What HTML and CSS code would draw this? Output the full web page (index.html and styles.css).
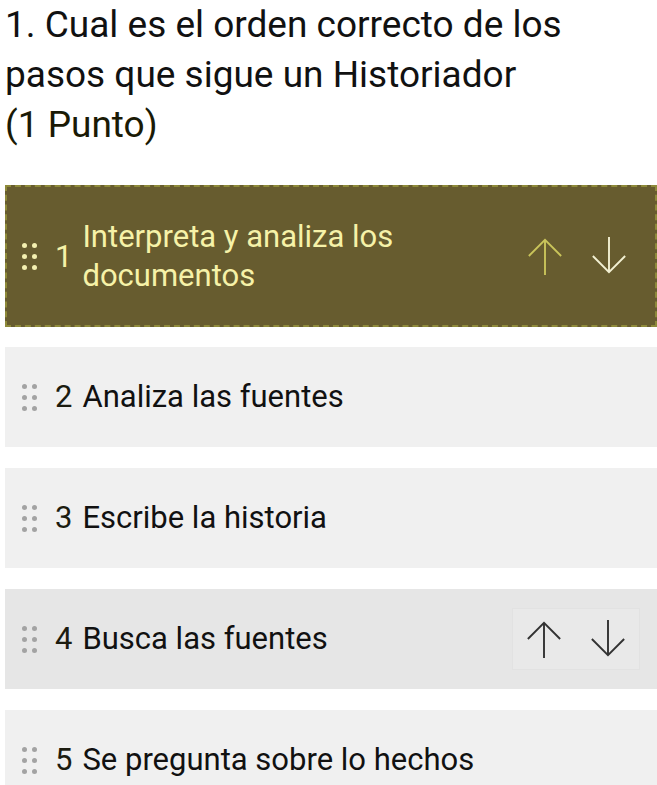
FILE: index.html
```html
<!DOCTYPE html>
<html lang="es">
<head>
  <meta charset="UTF-8" />
  <title>Ordenar pasos</title>
  <link rel="stylesheet" href="styles.css">
</head>
<body>

<div class="question">
  <h2 class="question-title">1. Cual es el orden correcto de los pasos que sigue un Historiador <span class="points">(1 Punto)</span></h2>

  <ul class="rank-list">
    <li class="rank-item selected">
      <span class="handle"><i></i><i></i><i></i><i></i><i></i><i></i></span>
      <span class="num">1</span>
      <span class="label">Interpreta y analiza los documentos</span>
      <span class="moves">
        <svg class="arrow up" viewBox="0 0 40 40"><path d="M20 3V40M3 20L20 3L37 20"/></svg>
        <svg class="arrow down" viewBox="0 0 40 40"><path d="M20 0V37M3 20L20 37L37 20"/></svg>
      </span>
    </li>
    <li class="rank-item">
      <span class="handle"><i></i><i></i><i></i><i></i><i></i><i></i></span>
      <span class="num">2</span>
      <span class="label">Analiza las fuentes</span>
    </li>
    <li class="rank-item">
      <span class="handle"><i></i><i></i><i></i><i></i><i></i><i></i></span>
      <span class="num">3</span>
      <span class="label">Escribe la historia</span>
    </li>
    <li class="rank-item hover">
      <span class="handle"><i></i><i></i><i></i><i></i><i></i><i></i></span>
      <span class="num">4</span>
      <span class="label">Busca las fuentes</span>
      <span class="moves boxed">
        <svg class="arrow up" viewBox="0 0 40 40"><path d="M20 3V40M3 20L20 3L37 20"/></svg>
        <svg class="arrow down" viewBox="0 0 40 40"><path d="M20 0V37M3 20L20 37L37 20"/></svg>
      </span>
    </li>
    <li class="rank-item">
      <span class="handle"><i></i><i></i><i></i><i></i><i></i><i></i></span>
      <span class="num">5</span>
      <span class="label">Se pregunta sobre lo hechos</span>
    </li>
  </ul>
</div>

</body>
</html>
```

FILE: styles.css
```css
body {
  margin: 0;
  padding: 0 0 0 5px;
  font-family: Roboto, 'Noto Sans', sans-serif;
  background-color: #ffffff;
  overflow: hidden;
}

.question-title {
  margin: 0 40px 35px 0;
  font-size: 37px;
  line-height: 50px;
  font-weight: 400;
  color: #111111;
}

.points {
  display: block;
  color: #1a1a05;
}

.rank-list {
  list-style: none;
  margin: 0;
  padding: 0;
}

.rank-item {
  display: flex;
  align-items: center;
  padding: 31px 17px;
  margin-bottom: 21px;
  background-color: #f0f0f0;
  color: #111111;
  font-size: 31px;
  line-height: 38px;
}

.rank-item:first-child {
  margin-bottom: 20px;
}

.rank-item.hover {
  background-color: #e6e6e6;
}

.rank-item.selected {
  background-color: #675c2f;
  border: 2px dashed #8e8a3a;
  padding: 30px 15px;
  line-height: 39px;
  color: #f6f2a8;
}

.handle {
  display: grid;
  grid-template-columns: 5px 5px;
  grid-auto-rows: 5px;
  column-gap: 5px;
  row-gap: 6px;
  margin-right: 18px;
}

.handle i {
  display: block;
  width: 5px;
  height: 5px;
  border-radius: 50%;
  background-color: #a3a3a3;
}

.selected .handle i {
  background-color: #f4f0b0;
}

.num {
  margin-right: 10px;
  color: #1c1c10;
}

.selected .num {
  color: #f6f2a8;
}

.label {
  flex: 1;
}

.moves {
  display: flex;
  align-items: center;
  gap: 26px;
  padding: 10px 12px;
  margin: -12px 0 -12px auto;
}

.moves.boxed {
  background-color: #e9e9e9;
  border: 1px solid #e2e2e2;
}

.arrow {
  width: 38px;
  height: 40px;
  fill: none;
  stroke: #333333;
  stroke-width: 2;
}

.selected .arrow.up {
  stroke: #c9c45a;
}

.selected .arrow.down {
  stroke: #f2f0d2;
}
```
